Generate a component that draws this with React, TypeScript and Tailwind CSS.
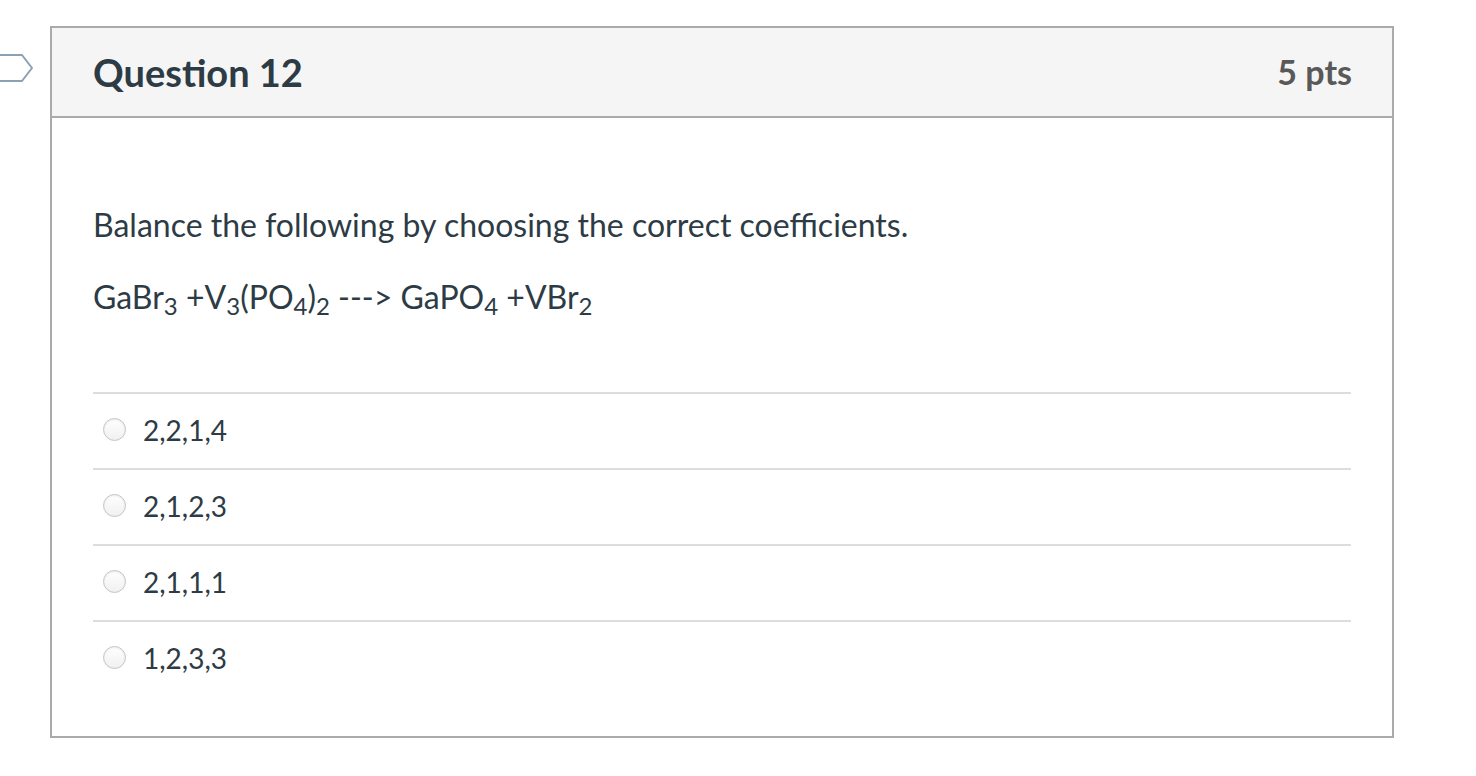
import React from "react";

const answers = ["2,2,1,4", "2,1,2,3", "2,1,1,1", "1,2,3,3"];

function Radio() {
  return (
    <span className="inline-block shrink-0 w-[23px] h-[23px] rounded-full border border-[#c4c4c4] bg-gradient-to-b from-[#ffffff] to-[#f0f0f0] shadow-[inset_0_1px_2px_rgba(0,0,0,0.08)]" />
  );
}

export default function App() {
  return (
    <div className="relative w-[1476px] h-[776px] bg-white font-['Lato','Liberation_Sans',sans-serif] text-[#2d3b45]">
      <svg className="absolute left-0 top-[52px]" width="36" height="32" viewBox="0 0 36 32">
        <path d="M-4 3 H22 L32 16 L22 29 H-4" fill="white" stroke="#8aa0b3" strokeWidth="2" strokeLinejoin="round" />
      </svg>
      <div className="absolute left-[50px] top-[26px] w-[1344px] border-2 border-[#aaaaaa]">
        <div className="h-[90px] bg-[#f5f5f5] border-b-2 border-[#aaaaaa] flex items-center justify-between pl-[41px] pr-[40px]">
          <span className="text-[38px] leading-[46px] font-bold">Question 12</span>
          <span className="text-[34px] leading-[46px] font-bold text-[#595959]">5 pts</span>
        </div>
        <div className="px-[41px] pt-[86px] pb-[40px]">
          <p className="text-[32px] leading-[42px]">Balance the following by choosing the correct coefficients.</p>
          <p className="text-[32px] leading-[42px] mt-[30px]">
            GaBr<sub>3</sub> +V<sub>3</sub>(PO<sub>4</sub>)<sub>2</sub> ---&gt; GaPO<sub>4</sub> +VBr<sub>2</sub>
          </p>
          <div className="mt-[74px]">
            {answers.map((a) => (
              <div key={a} className="h-[76px] border-t-2 border-[#dddddd] flex items-center pl-[10px] pb-[3px]">
                <Radio />
                <span className="ml-[17px] text-[28px] leading-[36px]">{a}</span>
              </div>
            ))}
          </div>
        </div>
      </div>
    </div>
  );
}
